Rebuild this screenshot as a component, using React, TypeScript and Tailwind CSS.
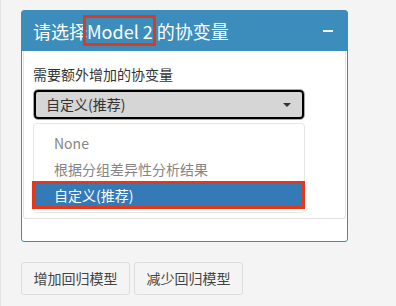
import React from "react";

const FONT = { fontFamily: '"Noto Sans CJK SC", "Noto Sans", sans-serif' };

export default function App() {
  return (
    <div
      className="h-[306px] w-[396px] overflow-hidden border-l border-[#e4e4e4] bg-[#f4f4f4] pl-[20px] pt-[10px]"
      style={FONT}
    >
      {/* box */}
      <div className="w-[327px] rounded-[3px] border border-[#3c8dbc] bg-white">
        <div className="flex h-[40px] items-center justify-between bg-[#3c8dbc] pl-[11px] pr-[14px] text-[18px] text-white">
          <span className="flex items-center leading-none">
            <span>请选择</span>
            <span className="relative">
              Model 2
              <span className="absolute -left-[4px] -right-[3px] -top-[7px] -bottom-[6px] border-[3px] border-[#e2391d]" />
            </span>
            <span className="ml-[4px]">的协变量</span>
          </span>
          <span className="block h-[2px] w-[10px] bg-white/90" />
        </div>

        <div className="mx-px rounded-b-[3px] border border-t-0 border-[#e2e2e2] px-[9px] pb-[5px] pt-[13px]">
          <div className="text-[14px] leading-[20px] text-[#333]">需要额外增加的协变量</div>

          {/* select */}
          <div className="mt-[5px] w-[272px] rounded-[5px] border border-[#a8a8a8]">
            <div className="flex h-[29px] items-center justify-between rounded-[4px] border-2 border-black bg-[#d6d6d6] pl-[10px] pr-[11px]">
              <span className="text-[14px] text-[#333]">自定义(推荐)</span>
              <span className="h-0 w-0 border-x-[4px] border-t-[4px] border-x-transparent border-t-[#333]" />
            </div>
          </div>

          {/* dropdown */}
          <div className="mt-[3px] w-[272px] rounded-[4px] border border-[#e6e6e6] pb-[4px] pt-[6px] text-[14px]">
            <div className="flex h-[26px] items-center pl-[20px] text-[#858585]">None</div>
            <div className="flex h-[26px] items-center pl-[20px] text-[#858585]">根据分组差异性分析结果</div>
            <div className="relative flex h-[26px] items-center bg-[#337ab7] pl-[20px] text-white">
              自定义(推荐)
              <span className="absolute -left-[2px] -right-px -top-px -bottom-px border-[3px] border-[#e2391d]" />
            </div>
          </div>
        </div>
        <div className="h-[22px]" />
      </div>

      <div className="mt-[20px] flex gap-[4px]">
        <button className="h-[33px] w-[109px] rounded-[3px] border border-[#dddddd] bg-[#f4f4f4] text-[14px] text-[#444]">
          增加回归模型
        </button>
        <button className="h-[33px] w-[109px] rounded-[3px] border border-[#dddddd] bg-[#f4f4f4] text-[14px] text-[#444]">
          减少回归模型
        </button>
      </div>
    </div>
  );
}
